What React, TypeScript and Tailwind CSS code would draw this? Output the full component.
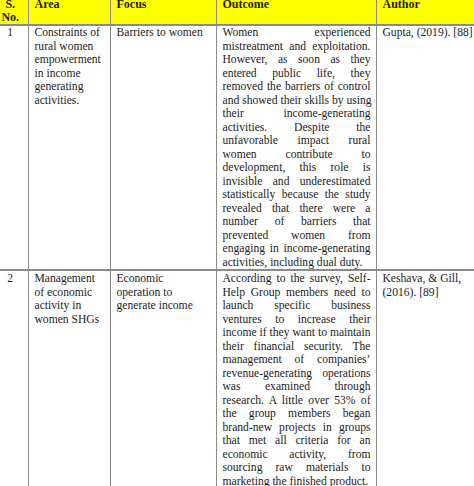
const rows = [
  {
    no: "1",
    area: ["Constraints of", "rural women", "empowerment", "in income", "generating", "activities."],
    focus: ["Barriers to women"],
    outcome: [
      "Women experienced",
      "mistreatment and exploitation.",
      "However, as soon as they",
      "entered public life, they",
      "removed the barriers of control",
      "and showed their skills by using",
      "their income-generating",
      "activities. Despite the",
      "unfavorable impact rural",
      "women contribute to",
      "development, this role is",
      "invisible and underestimated",
      "statistically because the study",
      "revealed that there were a",
      "number of barriers that",
      "prevented women from",
      "engaging in income-generating",
      "activities, including dual duty.",
    ],
    author: ["Gupta, (2019). [88]"],
  },
  {
    no: "2",
    area: ["Management", "of economic", "activity in", "women SHGs"],
    focus: ["Economic", "operation to", "generate income"],
    outcome: [
      "According to the survey, Self-",
      "Help Group members need to",
      "launch specific business",
      "ventures to increase their",
      "income if they want to maintain",
      "their financial security. The",
      "management of companies’",
      "revenue-generating operations",
      "was examined through",
      "research. A little over 53% of",
      "the group members began",
      "brand-new projects in groups",
      "that met all criteria for an",
      "economic activity, from",
      "sourcing raw materials to",
      "marketing the finished product.",
    ],
    author: ["Keshava, & Gill,", "(2016). [89]"],
  },
];

// each printed line kept as its own block so the breaks match the page
function Lines({ lines, justify }: { lines: string[]; justify?: boolean }) {
  return (
    <>
      {lines.map((l, i) => (
        <div
          key={i}
          className={
            justify && i < lines.length - 1
              ? "whitespace-nowrap text-justify [text-align-last:justify]"
              : "whitespace-nowrap"
          }
        >
          {l}
        </div>
      ))}
    </>
  );
}

const cell = "border-b-2 border-[#8a8a8a] align-top text-left";

export default function App() {
  return (
    <div className="h-[486px] w-[474px] overflow-hidden bg-white">
      <table
        className="-ml-[7px] -mt-[2px] w-[493px] table-fixed border-collapse text-[11.6px] leading-[13.5px] text-[#1c1c1c]"
        style={{ fontFamily: '"Liberation Serif", "Times New Roman", serif' }}
      >
        <colgroup>
          <col className="w-[35px]" />
          <col className="w-[82px]" />
          <col className="w-[106px]" />
          <col className="w-[160px]" />
          <col className="w-[110px]" />
        </colgroup>
        <thead>
          <tr className="bg-[#ffff00] text-[12px] leading-[13px]">
            <th className={`${cell} border-r px-0 font-bold`}>
              <div className="text-center">
                S.
                <br />
                No.
              </div>
            </th>
            <th className={`${cell} border-r px-[6px] font-bold`}>Area</th>
            <th className={`${cell} border-r px-[6px] font-bold`}>Focus</th>
            <th className={`${cell} border-r px-[6px] font-bold`}>Outcome</th>
            <th className={`${cell} px-[6px] font-bold`}>Author</th>
          </tr>
        </thead>
        <tbody>
          {rows.map((r, idx) => (
            <tr key={r.no} className={idx === 0 ? "" : "[&>td]:pt-[1px]"}>
              <td className={`${cell} border-r`}>
                <div className="text-center">{r.no}</div>
              </td>
              <td className={`${cell} border-r px-[6px]`}>
                <Lines lines={r.area} />
              </td>
              <td className={`${cell} border-r px-[6px]`}>
                <Lines lines={r.focus} />
              </td>
              <td className={`${cell} border-r pl-[6px] pr-[5px]`}>
                <Lines lines={r.outcome} justify />
              </td>
              <td className={`${cell} px-[6px]`}>
                <Lines lines={r.author} />
              </td>
            </tr>
          ))}
        </tbody>
      </table>
    </div>
  );
}
